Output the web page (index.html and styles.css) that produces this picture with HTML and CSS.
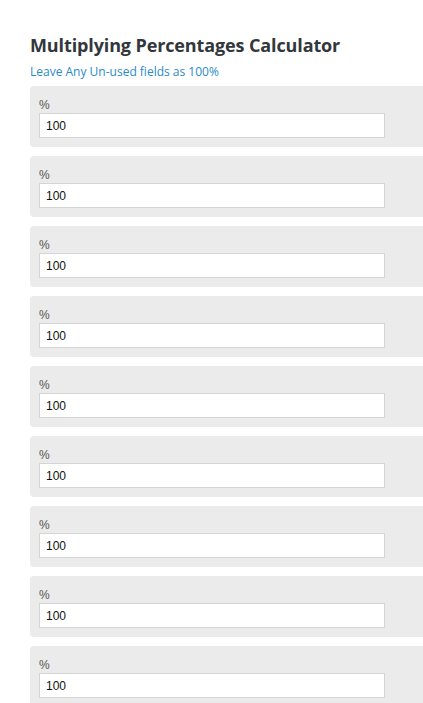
FILE: index.html
```html
<!DOCTYPE html>
<html>
<head>
<meta charset="utf-8">
<link rel="stylesheet" href="styles.css">
</head>
<body>
<div class="page">
  <h1 class="title">Multiplying Percentages Calculator</h1>
  <p class="hint">Leave Any Un-used fields as 100%</p>
  <div class="fields">
    <div class="field"><label class="lbl">%</label><input class="inp" type="text" value="100"></div>
    <div class="field"><label class="lbl">%</label><input class="inp" type="text" value="100"></div>
    <div class="field"><label class="lbl">%</label><input class="inp" type="text" value="100"></div>
    <div class="field"><label class="lbl">%</label><input class="inp" type="text" value="100"></div>
    <div class="field"><label class="lbl">%</label><input class="inp" type="text" value="100"></div>
    <div class="field"><label class="lbl">%</label><input class="inp" type="text" value="100"></div>
    <div class="field"><label class="lbl">%</label><input class="inp" type="text" value="100"></div>
    <div class="field"><label class="lbl">%</label><input class="inp" type="text" value="100"></div>
    <div class="field"><label class="lbl">%</label><input class="inp" type="text" value="100"></div>
  </div>
</div>
</body>
</html>
```
FILE: styles.css
```css
html, body {
  margin: 0;
  padding: 0;
  background: #ffffff;
  overflow: hidden;
}
.page {
  padding: 32px 0 0 30px;
  font-family: "Open Sans", "Noto Sans", sans-serif;
}
.title {
  margin: 0;
  font-size: 18px;
  line-height: 26px;
  font-weight: 700;
  letter-spacing: -0.12px;
  color: #32373c;
}
.hint {
  margin: 6px 0 0 0;
  font-size: 12px;
  line-height: 16px;
  color: #2a8bcb;
}
.fields {
  margin-top: 6px;
  display: flex;
  flex-direction: column;
  gap: 9px;
}
.field {
  background: #ebebeb;
  border-radius: 4px 0 0 4px;
  height: 61px;
  box-sizing: border-box;
  padding: 11px 0 0 9px;
  display: flex;
  flex-direction: column;
  margin-right: -10px;
}
.lbl {
  font-family: "Liberation Sans", Arial, sans-serif;
  font-size: 12px;
  line-height: 16px;
  color: #555;
}
.inp {
  margin: 0;
  width: 346px;
  height: 25px;
  box-sizing: border-box;
  border: 1px solid #d4d4d4;
  background: #fff;
  padding: 0 6px;
  font-family: "Liberation Sans", Arial, sans-serif;
  font-size: 12px;
  color: #111;
  outline: none;
}
```
